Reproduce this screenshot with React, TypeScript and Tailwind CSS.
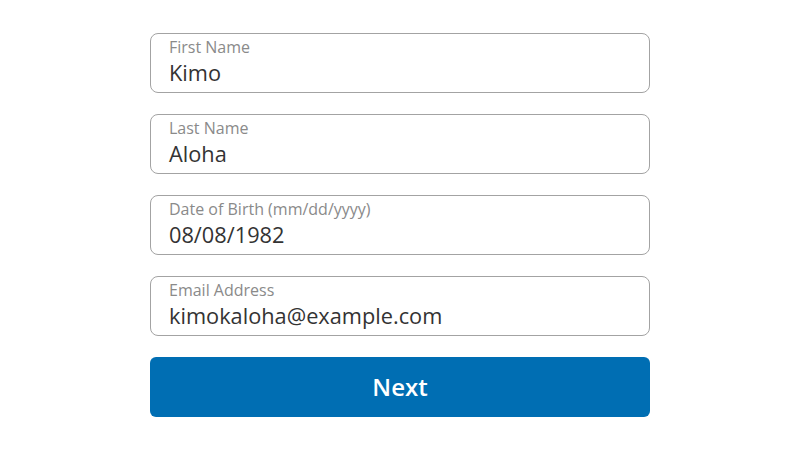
import { FC } from "react";

interface FieldProps {
  label: string;
  value: string;
}

const Field: FC<FieldProps> = ({ label, value }) => {
  return (
    <div className="h-[60px] w-full rounded-lg border border-[#a3a3a3] bg-white pl-[18px] pt-[3px]">
      <div className="text-[16px] leading-[21px] text-[#8a8a8a]">{label}</div>
      <div className="text-[21.75px] leading-[30px] text-[#333333]">{value}</div>
    </div>
  );
};

const fields = [
  { label: "First Name", value: "Kimo" },
  { label: "Last Name", value: "Aloha" },
  { label: "Date of Birth (mm/dd/yyyy)", value: "08/08/1982" },
  { label: "Email Address", value: "kimokaloha@example.com" },
];

const App: FC = () => {
  return (
    <div
      className="flex h-[450px] w-[800px] justify-center bg-white pt-[33px]"
      style={{ fontFamily: '"Open Sans", "Noto Sans", sans-serif' }}
    >
      <div className="flex w-[500px] flex-col gap-[21px]">
        {fields.map((f) => (
          <Field key={f.label} label={f.label} value={f.value} />
        ))}
        <button className="flex h-[60px] w-full items-center justify-center rounded-md bg-[#006eb3] text-[24px] font-semibold text-white">
          Next
        </button>
      </div>
    </div>
  );
};

export default App;
